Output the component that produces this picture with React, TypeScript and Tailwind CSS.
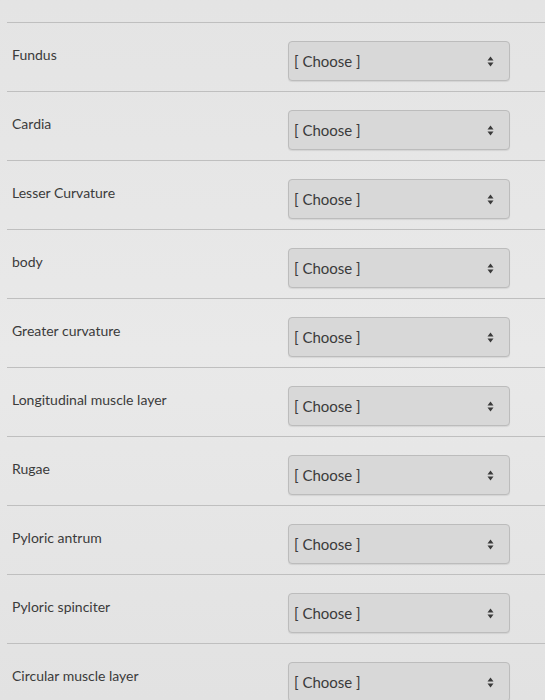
const items = [
  "Fundus",
  "Cardia",
  "Lesser Curvature",
  "body",
  "Greater curvature",
  "Longitudinal muscle layer",
  "Rugae",
  "Pyloric antrum",
  "Pyloric spinciter",
  "Circular muscle layer",
];

const Arrows = () => (
  <svg width="7" height="11" viewBox="0 0 7 11" className="shrink-0">
    <path d="M3.5 0.5 L6.5 4.5 L0.5 4.5 Z" fill="#3a3a3a" />
    <path d="M3.5 10.5 L6.5 6.5 L0.5 6.5 Z" fill="#3a3a3a" />
  </svg>
);

const Row = ({ label }: { label: string }) => (
  <div className="h-[69px] border-t border-[#bfbfbf] flex items-start pl-[5px]">
    <div className="w-[276px] pt-[21px] text-[14px] text-[#3b3b3b]">{label}</div>
    <div className="mt-[18px] w-[222px] h-[40px] rounded-[4px] border border-[#bcbcbc] bg-[#d8d8d8] shadow-[0_1px_1px_rgba(0,0,0,0.08)] flex items-center justify-between pl-[5px] pr-[15px]">
      <span className="text-[15px] text-[#3b3b3b]">[ Choose ]</span>
      <Arrows />
    </div>
  </div>
);

export default function App() {
  return (
    <div
      className="w-[545px] h-[700px] overflow-hidden bg-gradient-to-b from-[#e4e4e4] via-[#e9e9e9] to-[#e2e2e2] pt-[22px] pl-[7px]"
      style={{ fontFamily: "Lato, 'Open Sans', sans-serif" }}
    >
      {items.map((label) => (
        <Row key={label} label={label} />
      ))}
    </div>
  );
}
